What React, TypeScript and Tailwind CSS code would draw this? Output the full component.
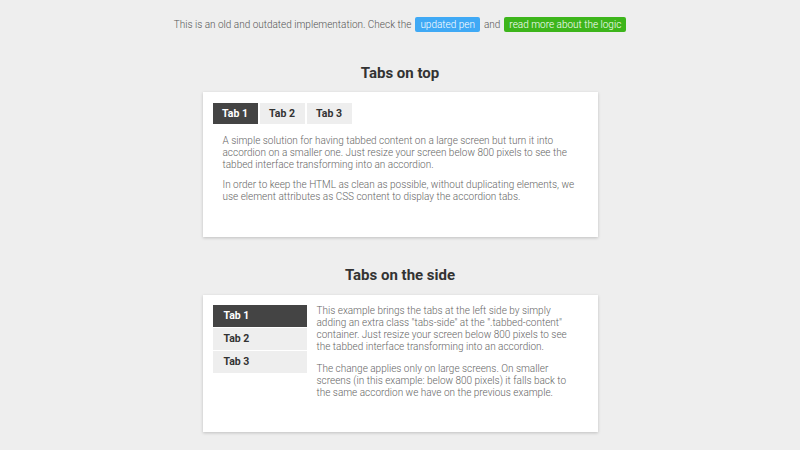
import React, { useState } from 'react';

const topText = [
  'A simple solution for having tabbed content on a large screen but turn it into accordion on a smaller one. Just resize your screen below 800 pixels to see the tabbed interface transforming into an accordion.',
  'In order to keep the HTML as clean as possible, without duplicating elements, we use element attributes as CSS content to display the accordion tabs.',
];

const sideText = [
  'This example brings the tabs at the left side by simply adding an extra class "tabs-side" at the ".tabbed-content" container. Just resize your screen below 800 pixels to see the tabbed interface transforming into an accordion.',
  'The change applies only on large screens. On smaller screens (in this example: below 800 pixels) it falls back to the same accordion we have on the previous example.',
];

const tabs = ['Tab 1', 'Tab 2', 'Tab 3'];

const App: React.FC = () => {
  const [topTab, setTopTab] = useState(0);
  const [sideTab, setSideTab] = useState(0);

  return (
    <div className="min-h-[450px] w-full bg-[#eeeeee] font-['Roboto',sans-serif] text-[#333]">
      {/* notice */}
      <div className="flex items-center justify-center gap-[4px] pt-[17px] text-[10px] leading-[15px] font-light text-[#555]">
        <span>This is an old and outdated implementation. Check the</span>
        <a className="rounded-[2px] bg-[#3fa9f5] px-[5px] text-white">updated pen</a>
        <span>and</span>
        <a className="rounded-[2px] bg-[#3db51b] px-[5px] text-white">read more about the logic</a>
      </div>

      {/* tabs on top */}
      <h2 className="mt-[31px] text-center text-[15px] leading-[20px] font-bold text-[#333]">Tabs on top</h2>
      <div className="mx-auto mt-[9px] h-[145px] w-[395px] bg-white p-[10px] shadow-[0_1px_3px_rgba(0,0,0,0.2)]">
        <div className="flex gap-[2px] pt-[1px]">
          {tabs.map((t, i) => (
            <button
              key={t}
              onClick={() => setTopTab(i)}
              className={`h-[21px] w-[45px] text-[10.5px] font-bold ${
                topTab === i ? 'bg-[#444] text-white' : 'bg-[#eee] text-[#333]'
              }`}
            >
              {t}
            </button>
          ))}
        </div>
        <div className="px-[10px] pt-[11px] text-[10px] leading-[12px] font-light text-[#666]">
          {topText.map((p, i) => (
            <p key={i} className="mb-[8px]">{p}</p>
          ))}
        </div>
      </div>

      {/* tabs on side */}
      <h2 className="mt-[28px] text-center text-[15px] leading-[20px] font-bold text-[#333]">Tabs on the side</h2>
      <div className="mx-auto mt-[10px] flex h-[137px] w-[395px] gap-[10px] bg-white p-[10px] shadow-[0_1px_3px_rgba(0,0,0,0.2)]">
        <div className="flex w-[94px] shrink-0 flex-col gap-[1px]">
          {tabs.map((t, i) => (
            <button
              key={t}
              onClick={() => setSideTab(i)}
              className={`h-[22px] px-[11px] text-left text-[10.5px] font-bold ${
                sideTab === i ? 'bg-[#444] text-white' : 'bg-[#eee] text-[#333]'
              }`}
            >
              {t}
            </button>
          ))}
        </div>
        <div className="w-[258px] text-[10px] leading-[12px] font-light text-[#666]">
          {sideText.map((p, i) => (
            <p key={i} className="mb-[10px]">{p}</p>
          ))}
        </div>
      </div>
    </div>
  );
};

export default App;
